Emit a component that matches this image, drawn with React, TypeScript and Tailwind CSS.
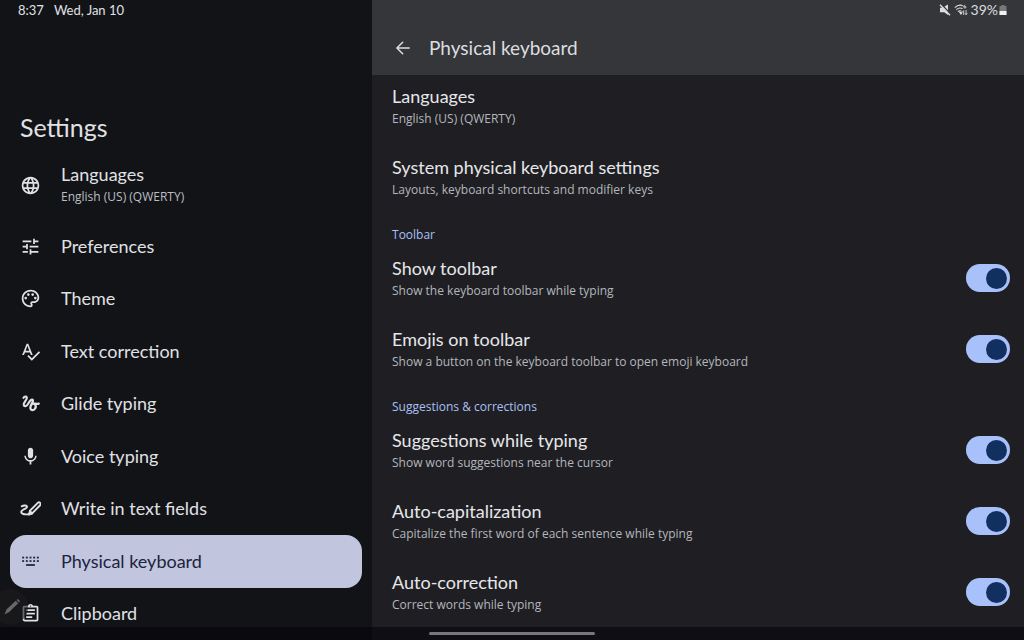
import { useState } from 'react'
import type { ReactNode } from 'react'
import {
    MdLanguage,
    MdMic,
    MdOutlineAssignment,
    MdOutlinePalette,
    MdSpellcheck,
    MdTune,
} from 'react-icons/md'

const ICON = 'w-[21px] h-[21px] shrink-0'
const SMALL_TEXT = "block font-['Open_Sans','Liberation_Sans',sans-serif] text-[12px]"

function BackIcon() {
    return (
        <svg viewBox="0 0 20 20" className="w-5 h-5" fill="none" stroke="currentColor" strokeWidth="1.500" strokeLinecap="round" strokeLinejoin="round">
            <path d="M16.200 10H4.200M9.700 4.200L3.900 10l5.800 5.800" />
        </svg>
    )
}

function GlideIcon() {
    return (
        <svg viewBox="0 0 24 24" className={ICON} fill="none" stroke="currentColor" strokeWidth="2.500" strokeLinecap="round" strokeLinejoin="round">
            <path d="M4 5.400C5.300 3.300 8.200 3.500 7.700 6.200 7.300 8.600 3.900 10.800 4.300 13.400c.5 2.600 3.300 1.700 4.700-.5C10.600 10.300 12 7 14 7.600c1.900.6.4 2.800-.7 4.800-1.200 2.300-2.100 4.200-1.200 5.900.8 1.600 3.300 1.700 4.700.1 1.300-1.500 1.400-4 .2-5.400-1.200-1.200-3-.9-4 .4M14.500 12.300c2.300-.9 4 .7 7-.2" />
        </svg>
    )
}

function WriteIcon() {
    return (
        <svg viewBox="0 0 24 24" className={ICON} fill="none" stroke="currentColor" strokeWidth="2.200" strokeLinecap="round" strokeLinejoin="round">
            <path d="M2 9.500c2.400-1.500 6.300-1.200 6 1-.3 2.200-6.500 2.500-6.700 5.400-.1 2.200 3.700 3.300 8.700 2.600" />
            <path d="M10.500 18.800l.9-4.300L20.300 5.600c.9-.9 2-.7 2.700 0s.9 1.800 0 2.700L14.400 17z" />
            <path d="M10.500 18.800l1.100-3.500 2.400 2.400z" fill="currentColor" />
        </svg>
    )
}

function KeyboardIcon() {
    const columns = [2.5, 6.7, 10.9, 15.1, 19.3]
    return (
        <svg viewBox="0 0 24 24" className={ICON} fill="currentColor">
            {columns.map((x) => (
                <g key={x}>
                    <rect x={x} y="6.500" width="2.200" height="2" />
                    <rect x={x} y="10.500" width="2.200" height="2" />
                </g>
            ))}
            <rect x="7" y="15" width="10" height="2" />
        </svg>
    )
}

const NAV_ITEMS: { label: string; icon: ReactNode }[] = [
    { label: 'Preferences', icon: <MdTune className={ICON} /> },
    { label: 'Theme', icon: <MdOutlinePalette className={ICON} /> },
    { label: 'Text correction', icon: <MdSpellcheck className={ICON} /> },
    { label: 'Glide typing', icon: <GlideIcon /> },
    { label: 'Voice typing', icon: <MdMic className={ICON} /> },
    { label: 'Write in text fields', icon: <WriteIcon /> },
    { label: 'Physical keyboard', icon: <KeyboardIcon /> },
    { label: 'Clipboard', icon: <MdOutlineAssignment className={ICON} /> },
]

function Sidebar() {
    const [active, setActive] = useState('Physical keyboard')

    return (
        <aside className="w-[36.33%] shrink-0 bg-[#121317] text-[#e0e1e5]">
            <div className="flex gap-[10px] pl-[18px] h-5 items-center text-[13px] leading-5">
                <span>8:37</span>
                <span>Wed, Jan 10</span>
            </div>
            <h1 className="mt-[91px] pl-5 text-[25px] leading-8">Settings</h1>
            <nav className="mt-[7px] px-[10px]">
                <button className="w-full h-[70px] flex items-center gap-5 px-[10px] text-left">
                    <MdLanguage className={ICON} />
                    <span>
                        <span className="block text-[18px] leading-6">Languages</span>
                        <span className={`${SMALL_TEXT} leading-[22px] text-[#bcbec4]`}>English (US) (QWERTY)</span>
                    </span>
                </button>
                <ul className="grid auto-rows-fr h-[420px]">
                    {NAV_ITEMS.map((item) => (
                        <li key={item.label}>
                            <button
                                onClick={() => setActive(item.label)}
                                className={`w-full h-full flex items-center gap-5 px-[10px] rounded-2xl text-left text-[18px] leading-6 ${
                                    active === item.label ? 'bg-[#c1c5dd] text-[#1c2340]' : ''
                                }`}
                            >
                                {item.icon}
                                <span className="pb-px">{item.label}</span>
                            </button>
                        </li>
                    ))}
                </ul>
            </nav>
        </aside>
    )
}

function StatusIcons() {
    return (
        <div className="flex items-center justify-end h-5 pr-[17px] text-[14px] leading-5 text-[#dcdde0]">
            {/* Muted speaker */}
            <svg viewBox="0 0 12 12" className="w-3 h-3" fill="currentColor">
                <path d="M1 3.800h2.400l.8-.5 4.800 4.900V11L5.200 8.200H1z" />
                <path d="M5.500 2.600L9 0.600v5.600z" />
                <path d="M1 0.800l10 10.400" stroke="currentColor" strokeWidth="1.400" />
            </svg>
            {/* Wi-Fi with transfer arrows */}
            <svg viewBox="0 0 14 12" className="w-[14px] h-3 ml-[3px]" fill="none" stroke="currentColor" strokeWidth="1.100">
                <path d="M.8 3.600C3.500 1 6.500.8 8.800 1.700M2.300 5.600C4.200 3.900 6.600 3.700 8.600 4.600M3.900 7.500c1.200-1 2.500-1 3.700-.3" />
                <path d="M5.700 8.200l1.300 1.900.9-1.200z" fill="currentColor" />
                <path d="M10.900.8C9.600 1.600 9.500 4.200 10.900 4.200s1.400-2 0-2-1.300.7-1.300.7" strokeWidth=".9" />
                <path d="M9.700 11V6.600M8.500 7.900l1.200-1.300M12.100 6v4.600m1.300-1.300l-1.300 1.400-1.200-1.400" strokeWidth=".9" />
            </svg>
            <span className="ml-[3px]">39%</span>
            <svg viewBox="0 0 8 10" className="w-2 h-[10px] ml-px">
                <path d="M2.500 0h3v1H7.500v9H.5V1h2z" fill="#77787b" />
                <rect x=".5" y="6" width="7" height="4" rx=".6" fill="#f1f1f3" />
            </svg>
        </div>
    )
}

interface RowProps {
    title: string
    summary: string
    toggle?: boolean
}

function Row({ title, summary, toggle }: RowProps) {
    const text = (
        <>
            <span className="block text-[18px] leading-6 text-[#e6e7ea]">{title}</span>
            <span className={`${SMALL_TEXT} leading-[22px] text-[#b4b6bd]`}>{summary}</span>
        </>
    )

    if (!toggle) {
        return <button className="block w-full pl-5 pt-[11px] pb-[14px] first:pt-[9px] text-left">{text}</button>
    }

    return (
        <label className="flex items-start justify-between pl-5 pr-[14px] pt-[11px] pb-[14px]">
            <span>{text}</span>
            <input
                type="checkbox"
                role="switch"
                defaultChecked
                className="appearance-none shrink-0 mt-2 w-11 h-7 rounded-full bg-[#47494f] checked:bg-[#a9c1fb] flex items-center px-[3px] checked:justify-end before:block before:w-[21px] before:h-[21px] before:rounded-full before:bg-[#12305f]"
            />
        </label>
    )
}

function SectionLabel({ children }: { children: ReactNode }) {
    return (
        <h3 className="pl-5 h-[30px] pt-[10px]">
            <span className={`${SMALL_TEXT} leading-5 text-[#a9c0f5]`}>{children}</span>
        </h3>
    )
}

export default function App() {
    return (
        <div className="relative h-screen overflow-hidden flex bg-[#1f1f23] font-['Lato','Liberation_Sans',sans-serif]">
            <Sidebar />
            <main className="flex-1 min-w-0">
                <header className="h-[75px] bg-[#353639]">
                    <StatusIcons />
                    <div className="flex items-center gap-4 pl-[21px] pt-3 text-[#dcdde0]">
                        <button aria-label="Go back">
                            <BackIcon />
                        </button>
                        <h2 className="text-[19px] leading-8">Physical keyboard</h2>
                    </div>
                </header>
                <div>
                    <Row title="Languages" summary="English (US) (QWERTY)" />
                    <Row title="System physical keyboard settings" summary="Layouts, keyboard shortcuts and modifier keys" />
                    <SectionLabel>Toolbar</SectionLabel>
                    <Row toggle title="Show toolbar" summary="Show the keyboard toolbar while typing" />
                    <Row toggle title="Emojis on toolbar" summary="Show a button on the keyboard toolbar to open emoji keyboard" />
                    <SectionLabel>Suggestions &amp; corrections</SectionLabel>
                    <Row toggle title="Suggestions while typing" summary="Show word suggestions near the cursor" />
                    <Row toggle title="Auto-capitalization" summary="Capitalize the first word of each sentence while typing" />
                    <Row toggle title="Auto-correction" summary="Correct words while typing" />
                </div>
            </main>

            {/* Stylus shortcut hanging off the left edge */}
            <button aria-label="Stylus menu" className="absolute -left-2 bottom-[15px] w-9 h-9 rounded-full bg-[#1c1b1c]/60 flex items-center justify-center">
                <svg viewBox="0 0 18 18" className="w-[18px] h-[18px] ml-1" fill="#68686a">
                    <path d="M1.500 16.500l2-5L12.700 2.800l2.500 2.500L6.200 14z" />
                    <path d="M13.500 2l1.300-1.100 2.300 2.300L16 4.500z" />
                </svg>
            </button>

            {/* System navigation bar */}
            <div className="absolute inset-x-0 bottom-0 h-[13px] bg-[#05030a]/60 flex items-center justify-center">
                <div className="w-[166px] h-[3px] rounded-full bg-[#78777b]" />
            </div>
        </div>
    )
}
